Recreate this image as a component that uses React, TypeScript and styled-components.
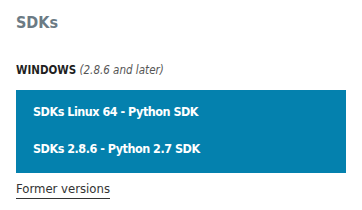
import styled, { createGlobalStyle } from "styled-components";

const GlobalStyle = createGlobalStyle`
  html, body {
    margin: 0;
    padding: 0;
    background: #ffffff;
  }
  body {
    font-family: "DejaVu Sans Condensed", "DejaVu Sans", sans-serif;
  }
`;

const Page = styled.div`
  width: 362px;
  height: 210px;
  padding: 14px 16px 0 16px;
  box-sizing: border-box;
  display: flex;
  flex-direction: column;
`;

const Title = styled.h2`
  margin: 0;
  font-size: 16px;
  line-height: 18px;
  font-weight: bold;
  color: #6b7a84;
`;

const Platform = styled.div`
  margin-top: 31px;
  font-size: 11.5px;
  line-height: 14px;
  color: #1f1f1f;

  strong {
    font-weight: bold;
  }
  em {
    font-style: italic;
    color: #555555;
  }
`;

const DownloadBox = styled.ul`
  list-style: none;
  margin: 13px 0 0 0;
  padding: 3px 0 6px 17px;
  width: 330px;
  box-sizing: border-box;
  background: #0481ae;
  display: flex;
  flex-direction: column;
`;

const DownloadItem = styled.li`
  height: 37px;
  display: flex;
  align-items: center;
  font-size: 12.5px;
  font-weight: bold;
  letter-spacing: -0.5px;
  color: #ffffff;
`;

const FormerLink = styled.a`
  margin-top: 8px;
  align-self: flex-start;
  font-size: 13px;
  line-height: 16px;
  color: #333333;
  text-decoration: none;
  border-bottom: 1px solid #333333;
  padding-bottom: 1px;
`;

export default function App() {
  return (
    <>
      <GlobalStyle />
      <Page>
        <Title>SDKs</Title>
        <Platform>
          <strong>WINDOWS</strong> <em>(2.8.6 and later)</em>
        </Platform>
        <DownloadBox>
          <DownloadItem>SDKs Linux 64 - Python SDK</DownloadItem>
          <DownloadItem>SDKs 2.8.6 - Python 2.7 SDK</DownloadItem>
        </DownloadBox>
        <FormerLink href="#">Former versions</FormerLink>
      </Page>
    </>
  );
}
